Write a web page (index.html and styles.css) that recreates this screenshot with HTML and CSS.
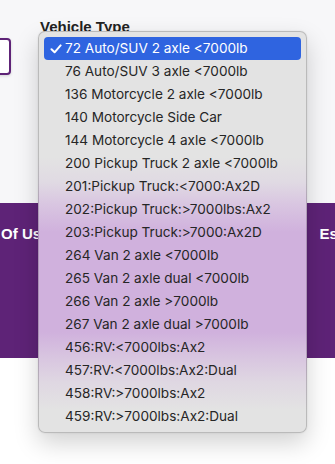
FILE: index.html
```html
<!DOCTYPE html>
<html lang="en">
<head>
  <meta charset="UTF-8">
  <title>Vehicle Type</title>
  <meta name="viewport" content="width=device-width, initial-scale=1.0">
  <link rel="stylesheet" href="styles.css">
</head>
<body>
  <section class="form-area">
    <label class="field-label" for="vehicle">Vehicle Type</label>
    <div class="select-box"></div>
  </section>

  <footer class="band">
    <nav class="band-links">
      <a href="#">Terms Of Use</a>
      <a href="#">Español</a>
    </nav>
  </footer>

  <div class="bottom"></div>

  <ul class="menu" id="vehicle">
    <li class="selected">
      <svg class="check" viewBox="0 0 12 10" width="12" height="10"><path d="M1.5 5.2 L4.6 8.3 L10.6 1.4" fill="none" stroke="currentColor" stroke-width="2" stroke-linecap="round" stroke-linejoin="round"/></svg>
      72 Auto/SUV 2 axle &lt;7000lb
    </li>
    <li>76 Auto/SUV 3 axle &lt;7000lb</li>
    <li>136 Motorcycle 2 axle &lt;7000lb</li>
    <li>140 Motorcycle Side Car</li>
    <li>144 Motorcycle 4 axle &lt;7000lb</li>
    <li>200 Pickup Truck 2 axle &lt;7000lb</li>
    <li>201:Pickup Truck:&lt;7000:Ax2D</li>
    <li>202:Pickup Truck:&gt;7000lbs:Ax2</li>
    <li>203:Pickup Truck:&gt;7000:Ax2D</li>
    <li>264 Van 2 axle &lt;7000lb</li>
    <li>265 Van 2 axle dual &lt;7000lb</li>
    <li>266 Van 2 axle &gt;7000lb</li>
    <li>267 Van 2 axle dual &gt;7000lb</li>
    <li>456:RV:&lt;7000lbs:Ax2</li>
    <li>457:RV:&lt;7000lbs:Ax2:Dual</li>
    <li>458:RV:&gt;7000lbs:Ax2</li>
    <li>459:RV:&gt;7000lbs:Ax2:Dual</li>
  </ul>
</body>
</html>
```

FILE: styles.css
```css
:root {
  --purple: #5e2377;
  --page: #f7f7f9;
  --menu-grey: #e3e3e3;
  --menu-tint: #d0b1dd;
  --menu-text: #262626;
  --highlight: #2f64e0;
}

body {
  margin: 0;
  padding: 0;
  font-family: 'Liberation Sans', Arial, sans-serif;
  background: #fff;
  overflow: hidden;
}

.form-area {
  height: 203px;
  box-sizing: border-box;
  padding-top: 18px;
  background: var(--page);
}

.field-label {
  display: block;
  margin-left: 40px;
  font-size: 15px;
  line-height: 17px;
  font-weight: bold;
  color: #222;
}

.select-box {
  width: 46px;
  height: 33px;
  margin-top: 3px;
  margin-left: -39px;
  background: #fff;
  border: 2px solid var(--purple);
  border-radius: 4px;
  box-shadow: 0 1px 3px rgba(0, 0, 0, 0.15);
}

.band {
  height: 155px;
  box-sizing: border-box;
  padding-top: 22px;
  background: var(--purple);
}

.band-links {
  display: flex;
  gap: 270px;
  margin-left: -47px;
  white-space: nowrap;
}

.band-links a {
  color: #fff;
  font-size: 15px;
  line-height: 17px;
  font-weight: bold;
  text-decoration: none;
}

.bottom {
  height: 106px;
  background: #fff;
}

.menu {
  position: absolute;
  top: 31px;
  left: 38px;
  width: 269px;
  box-sizing: border-box;
  margin: 0;
  padding: 5px 5px 4px 5px;
  list-style: none;
  border: 1px solid rgba(0, 0, 0, 0.18);
  border-radius: 7px;
  background: linear-gradient(
    to bottom,
    var(--menu-grey) 0,
    var(--menu-grey) 125px,
    #e0dae3 150px,
    #d9c6e1 172px,
    var(--menu-tint) 200px,
    var(--menu-tint) 300px,
    #d8c5e0 325px,
    #dfd7e2 350px,
    var(--menu-grey) 378px
  );
  box-shadow: 0 10px 24px rgba(0, 0, 0, 0.18), 0 0 2px rgba(0, 0, 0, 0.1);
  font-family: Inter, 'Noto Sans', sans-serif;
  font-size: 13.6px;
  color: var(--menu-text);
}

.menu li {
  position: relative;
  height: 23px;
  line-height: 23px;
  padding-left: 21px;
  border-radius: 4px;
  white-space: nowrap;
}

.menu li.selected {
  background: var(--highlight);
  color: #fff;
}

.check {
  position: absolute;
  left: 6px;
  top: 7px;
}
```
